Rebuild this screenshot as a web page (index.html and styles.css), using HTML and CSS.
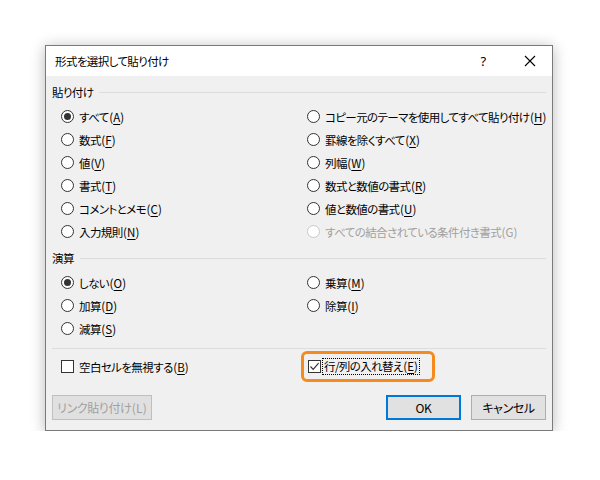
FILE: index.html
```html
<!DOCTYPE html>
<html lang="ja">
<head>
    <meta charset="UTF-8">
    <meta name="viewport" content="width=device-width, initial-scale=1.0">
    <title>形式を選択して貼り付け</title>
    <link rel="stylesheet" href="styles.css">
</head>
<body>
    <div class="dialog">
        <div class="titlebar">
            <span class="title">形式を選択して貼り付け</span>
            <span class="help">?</span>
            <span class="close">
                <svg width="12" height="12" viewBox="0 0 12 12"><path d="M1 1L11 11M11 1L1 11" stroke="#000" stroke-width="1.1" fill="none"/></svg>
            </span>
        </div>
        <div class="content">
            <div class="group-head"><span>貼り付け</span></div>
            <div class="options">
                <label class="opt"><span class="radio on"></span>すべて<span class="key">(<u>A</u>)</span></label>
                <label class="opt"><span class="radio"></span>コピー元のテーマを使用してすべて貼り付け<span class="key">(<u>H</u>)</span></label>
                <label class="opt"><span class="radio"></span>数式<span class="key">(<u>F</u>)</span></label>
                <label class="opt"><span class="radio"></span>罫線を除くすべて<span class="key">(<u>X</u>)</span></label>
                <label class="opt"><span class="radio"></span>値<span class="key">(<u>V</u>)</span></label>
                <label class="opt"><span class="radio"></span>列幅<span class="key">(<u>W</u>)</span></label>
                <label class="opt"><span class="radio"></span>書式<span class="key">(<u>T</u>)</span></label>
                <label class="opt"><span class="radio"></span>数式と数値の書式<span class="key">(<u>R</u>)</span></label>
                <label class="opt"><span class="radio"></span>コメントとメモ<span class="key">(<u>C</u>)</span></label>
                <label class="opt"><span class="radio"></span>値と数値の書式<span class="key">(<u>U</u>)</span></label>
                <label class="opt"><span class="radio"></span>入力規則<span class="key">(<u>N</u>)</span></label>
                <label class="opt disabled"><span class="radio"></span>すべての結合されている条件付き書式<span class="key">(G)</span></label>
            </div>

            <div class="group-head second"><span>演算</span></div>
            <div class="options">
                <label class="opt"><span class="radio on"></span>しない<span class="key">(<u>O</u>)</span></label>
                <label class="opt"><span class="radio"></span>乗算<span class="key">(<u>M</u>)</span></label>
                <label class="opt"><span class="radio"></span>加算<span class="key">(<u>D</u>)</span></label>
                <label class="opt"><span class="radio"></span>除算<span class="key">(<u>I</u>)</span></label>
                <label class="opt"><span class="radio"></span>減算<span class="key">(<u>S</u>)</span></label>
            </div>

            <div class="divider"></div>

            <div class="checks">
                <label class="opt"><span class="checkbox"></span>空白セルを無視する<span class="key">(<u>B</u>)</span></label>
                <div class="highlight">
                    <label class="opt">
                        <span class="checkbox">
                            <svg width="11" height="11" viewBox="0 0 11 11"><path d="M1.5 5.5L4.2 8.3L9.6 2.2" stroke="#333" stroke-width="1.2" fill="none"/></svg>
                        </span>
                        <span class="focus">行/列の入れ替え<span class="key">(<u>E</u>)</span></span>
                    </label>
                </div>
            </div>

            <div class="buttons">
                <button class="btn" disabled>リンク貼り付け<span class="key">(L)</span></button>
                <div class="btn-group">
                    <button class="btn btn-ok">OK</button>
                    <button class="btn btn-small">キャンセル</button>
                </div>
            </div>
        </div>
    </div>
</body>
</html>
```

FILE: styles.css
```css
body {
    margin: 0;
    background-color: #fff;
    font-family: "Noto Sans CJK JP", "Noto Sans", sans-serif;
    font-size: 11.5px;
    letter-spacing: -0.6px;
    font-feature-settings: "palt";
    color: #000;
}
.dialog {
    margin: 45px 0 0 45px;
    width: 506px;
    height: 384px;
    border: 1px solid #7a7a7a;
    background-color: #f0f0f0;
    box-shadow: 0 2px 14px rgba(0, 0, 0, 0.28);
}
.titlebar {
    height: 30px;
    background-color: #fff;
    display: flex;
    align-items: center;
}
.title {
    padding-left: 9px;
    flex: 1;
}
.help {
    width: 20px;
    text-align: center;
    font-family: "Noto Sans", sans-serif;
    font-size: 13px;
    margin-right: 31px;
}
.close {
    width: 12px;
    height: 12px;
    margin-right: 16px;
    display: flex;
}
.content {
    padding: 8px 6px 0 6px;
}
.group-head {
    height: 16px;
    display: flex;
    align-items: center;
}
.group-head::after {
    content: "";
    flex: 1;
    height: 1px;
    background-color: #dcdcdc;
    margin-left: 6px;
}
.group-head.second {
    margin-top: 7px;
}
.options {
    display: grid;
    grid-template-columns: 246px 1fr;
    grid-auto-rows: 23px;
    margin: 5px 0 0 9px;
}
.opt {
    display: flex;
    align-items: center;
    white-space: nowrap;
}
.key {
    letter-spacing: 0.1px;
    margin-left: 0.5px;
}
.key u {
    text-decoration-thickness: 1px;
    text-underline-offset: 2px;
}
.radio {
    width: 11px;
    height: 11px;
    border: 1px solid #333;
    border-radius: 50%;
    background-color: #fff;
    margin-right: 5px;
    display: flex;
    align-items: center;
    justify-content: center;
    flex-shrink: 0;
}
.radio.on::after {
    content: "";
    width: 7px;
    height: 7px;
    border-radius: 50%;
    background-color: #333;
}
.disabled {
    color: #a0a0a0;
}
.disabled .radio {
    border-color: #c8c8c8;
}
.divider {
    height: 1px;
    background-color: #dcdcdc;
    margin-top: 8px;
}
.checks {
    display: grid;
    grid-template-columns: 240px 1fr;
    align-items: center;
    margin: 2px 0 0 9px;
}
.checkbox {
    width: 11px;
    height: 11px;
    border: 1px solid #333;
    background-color: #fff;
    margin-right: 5px;
    display: flex;
    align-items: center;
    justify-content: center;
    flex-shrink: 0;
}
.highlight {
    width: 124px;
    height: 25px;
    border: 3px solid #f58a1f;
    border-radius: 6px;
    padding-left: 4px;
    display: flex;
    align-items: center;
}
.highlight .checkbox {
    margin-right: 1px;
}
.focus {
    border: 1px dotted #000;
    padding: 0 1px;
    line-height: 15px;
}
.buttons {
    display: flex;
    justify-content: space-between;
    margin-top: 13px;
}
.btn-group {
    display: flex;
    gap: 10px;
}
.btn {
    height: 25px;
    width: 100px;
    padding: 0;
    font-family: inherit;
    font-size: 12px;
    letter-spacing: -0.4px;
    font-feature-settings: "palt";
    background-color: #e1e1e1;
    border: 1px solid #adadad;
    color: #000;
}
.btn:disabled {
    color: #a0a0a0;
    border-color: #bfbfbf;
    background-color: #e0e0e0;
}
.btn-small {
    width: 75px;
}
.btn-ok {
    width: 75px;
    border: 2px solid #0078d7;
}
```
